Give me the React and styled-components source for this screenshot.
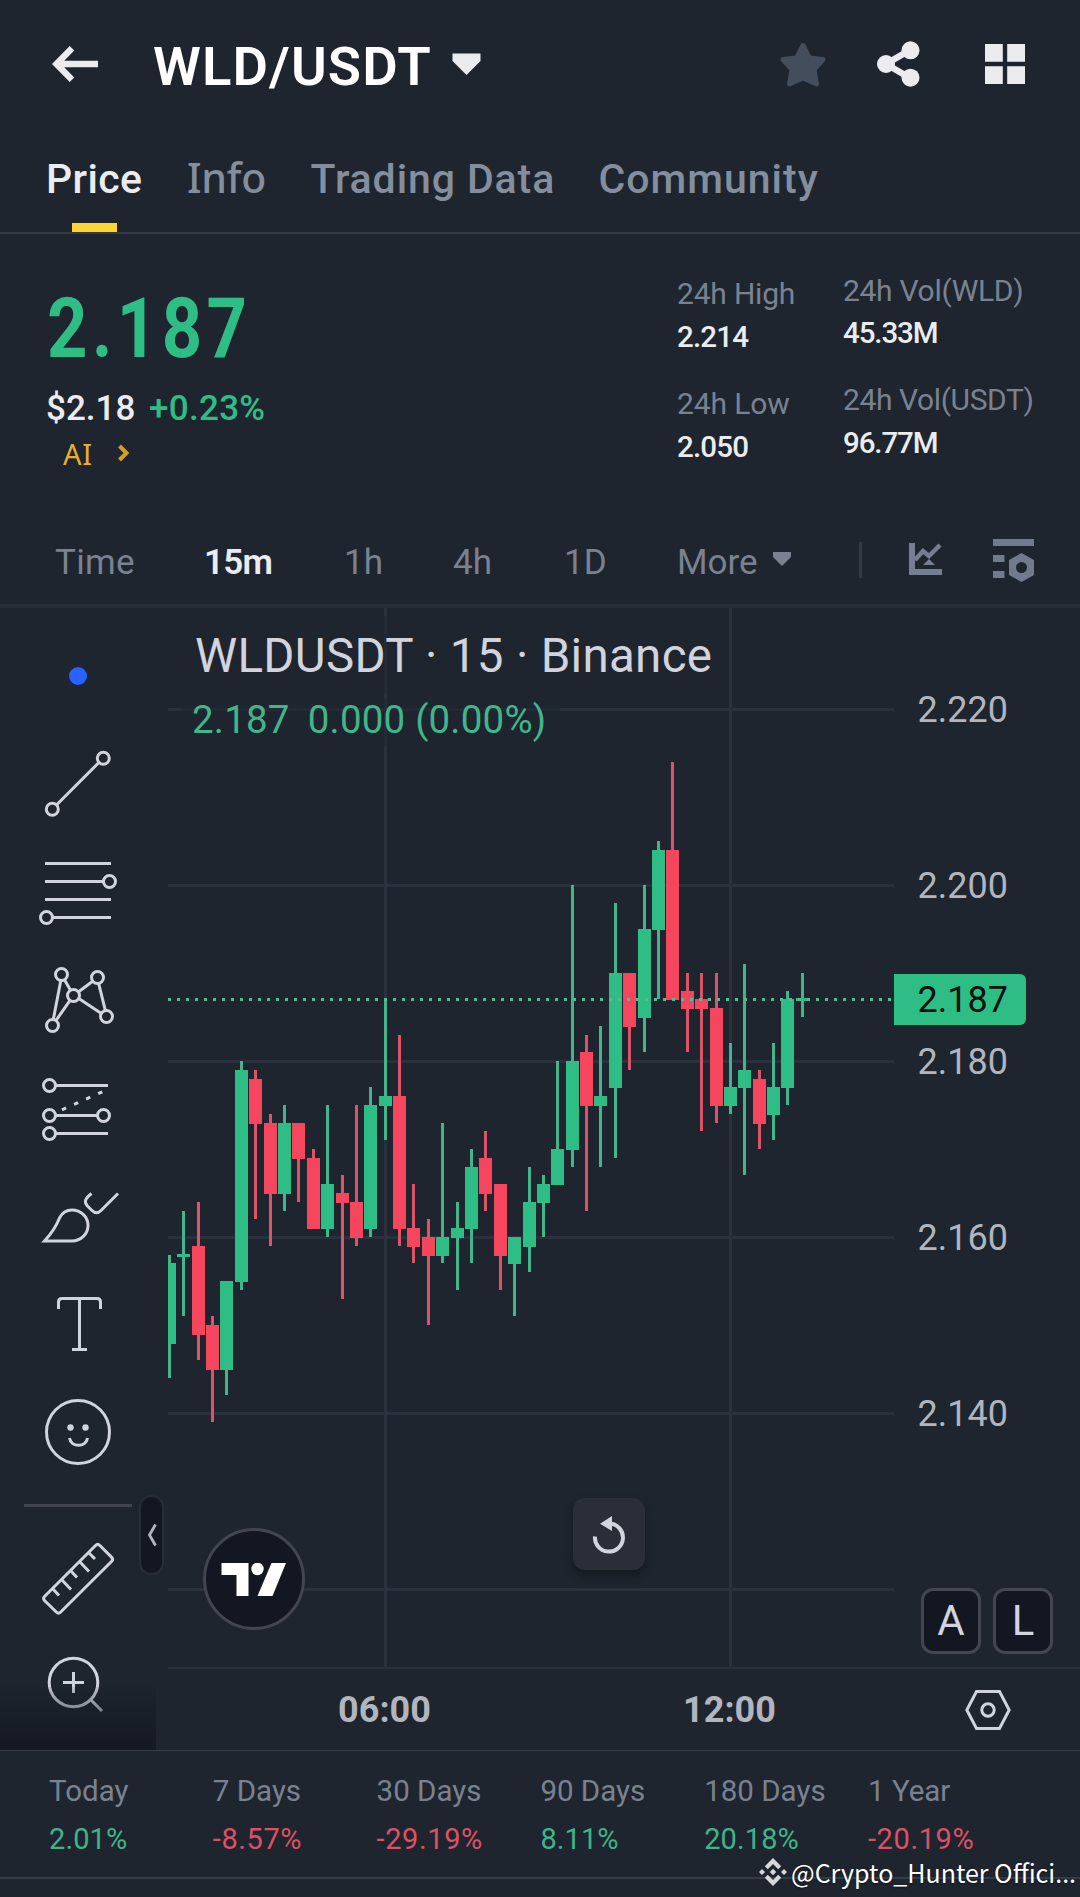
import React from "react";
import styled, { createGlobalStyle, css } from "styled-components";

const C = {
  bg: "#1e252f",
  line: "#2a313c",
  rule: "#333b47",
  green: "#2ebd85",
  greenWick: "#42b58a",
  red: "#f6465d",
  redWick: "#dd5368",
  muted: "#848e9c",
  dim: "#7a8290",
  text: "#eaecef",
  icon: "#d1d4dc",
  axis: "#b2b5be",
  panel: "#131722",
  edge: "#434651",
};

const Global = createGlobalStyle`
  html, body { margin: 0; background: ${C.bg}; }
  * { box-sizing: border-box; }
  svg { display: block; flex: none; }
`;

const Screen = styled.div`
  position: relative;
  width: 1080px;
  height: 1897px;
  overflow: hidden;
  display: flex;
  flex-direction: column;
  background: ${C.bg};
  color: ${C.text};
  font-family: Roboto, "Liberation Sans", sans-serif;
`;

/* ---------- header ---------- */
const Header = styled.header`
  height: 128px;
  display: flex;
  align-items: center;
  padding-left: 52px;
`;
const Pair = styled.h1`
  width: 299px;
  margin: 0 0 0 55px;
  padding-top: 4px;
  font-size: 54.5px;
  line-height: 55px;
  font-weight: 600;
  letter-spacing: 1.1px;
  white-space: nowrap;
  color: #fff;
`;
const HeaderActions = styled.div`
  display: flex;
  align-items: center;
  margin-left: auto;
  padding-right: 55px;
`;
const Gap = styled.span`
  width: ${(p) => p.$w}px;
`;

/* ---------- tabs ---------- */
const Tabs = styled.nav`
  height: 106px;
  display: flex;
  padding-left: 46px;
  border-bottom: 2px solid ${C.rule};
`;
const TabCell = styled.div`
  width: ${(p) => p.$w}px;
  display: flex;
  align-items: stretch;
`;
const Tab = styled.span`
  display: flex;
  flex-direction: column;
  align-items: center;
  justify-content: space-between;
  padding-top: 30px;
  font-size: 41px;
  line-height: 42px;
  font-weight: 500;
  letter-spacing: ${(p) => p.$ls || 0}px;
  white-space: nowrap;
  color: ${(p) => (p.$active ? C.text : C.muted)};
  ${(p) => p.$serifCap && css`
    font-family: "Noto Sans", sans-serif;
    padding-top: 28px;
  `}
`;
const TabMark = styled.i`
  width: 45px;
  height: 9px;
  background: #fcd535;
`;

/* ---------- ticker ---------- */
const Ticker = styled.section`
  height: 286px;
  display: flex;
`;
const PriceBlock = styled.div`
  width: 677px;
  padding: 52.5px 0 0 46px;
`;
const LastPrice = styled.div`
  width: 300px;
  margin-left: 1px;
  font-size: 83px;
  line-height: 83px;
  font-weight: 700;
  letter-spacing: 5.2px;
  color: ${C.green};
  transform: scaleX(0.85);
  transform-origin: left;
`;
const FiatRow = styled.div`
  display: flex;
  margin-top: 21px;
  font-size: 35px;
  line-height: 35px;
  font-weight: 500;
`;
const Fiat = styled.span`
  width: 103px;
`;
const Change = styled.span`
  color: ${C.green};
  letter-spacing: 0.3px;
`;
const AiRow = styled.div`
  display: flex;
  align-items: center;
  margin-top: 13px;
  padding-left: 17px;
  font-family: "Noto Sans", sans-serif;
  font-size: 29px;
  line-height: 29px;
  color: #e5b02c;
`;
const AiLabel = styled.span`
  width: 55px;
  letter-spacing: 0.6px;
`;
const StatColumn = styled.dl`
  width: ${(p) => p.$w}px;
  margin: 0;
  padding-top: ${(p) => p.$top}px;
  font-size: 30px;
  line-height: 30px;
  white-space: nowrap;
`;
const StatLabel = styled.dt`
  color: ${C.dim};
  letter-spacing: ${(p) => p.$ls || 0}px;
`;
const StatValue = styled.dd`
  margin: ${(p) => p.$gap}px 0 37px;
  font-weight: 500;
  font-size: 29.5px;
  letter-spacing: ${(p) => p.$ls}px;
`;

/* ---------- interval bar ---------- */
const Intervals = styled.div`
  height: 88px;
  display: flex;
  align-items: center;
  padding-left: 55px;
  border-bottom: 4px solid #272e39;
`;
const Interval = styled.span`
  width: ${(p) => p.$w}px;
  font-size: 35px;
  line-height: 35px;
  letter-spacing: ${(p) => p.$ls || 0}px;
  font-weight: ${(p) => (p.$active ? 600 : 400)};
  color: ${(p) => (p.$active ? C.text : C.dim)};
`;
const BarDivider = styled.i`
  width: 3px;
  height: 36px;
  margin: 0 47px 5px 68px;
  background: ${C.rule};
`;

/* ---------- chart ---------- */
const ChartArea = styled.section`
  position: relative;
  height: 1142px;
  display: grid;
  grid-template-columns: 168px 726px 186px;
  grid-template-rows: 1059px 83px;
`;
const Toolbar = styled.aside`
  position: relative;
  grid-row: 1 / 3;
  display: flex;
  flex-direction: column;
  padding-top: 14px;
`;
const Tool = styled.div`
  width: 156px;
  height: 108px;
  display: flex;
  align-items: center;
  justify-content: center;
`;
const Dot = styled.i`
  width: 18.5px;
  height: 18.5px;
  border-radius: 50%;
  background: #2962ff;
`;
const ToolRule = styled.i`
  width: 108px;
  height: 3px;
  margin: 18px 0 18px 24px;
  background: ${C.edge};
`;
const ToolbarFade = styled.div`
  position: absolute;
  left: 0;
  bottom: 0;
  width: 156px;
  height: 63px;
  background: linear-gradient(rgba(19, 23, 34, 0.1), rgba(19, 23, 34, 0.95));
`;
const CollapseHandle = styled.div`
  position: absolute;
  left: 139px;
  top: 887px;
  width: 25px;
  height: 80px;
  border: 2px solid #272c38;
  border-radius: 12px;
  background: ${C.panel};
  display: flex;
  align-items: center;
  justify-content: center;
`;
const Plot = styled.div`
  position: relative;
`;
const Legend = styled.div`
  position: absolute;
  left: 13px;
  top: 8px;
  display: flex;
  flex-direction: column;
  align-items: flex-start;
`;
const LegendTitle = styled.div`
  padding: 16px 0 14px 14px;
  font-size: 47.5px;
  line-height: 48px;
  white-space: nowrap;
  letter-spacing: 0.3px;
  color: #d1d4dc;
  background: rgba(30, 37, 47, 0.5);
`;
const LegendValues = styled.div`
  display: flex;
  gap: 18px;
  margin-top: 4px;
  padding: 2px 14px 7px 11px;
  font-size: 38.5px;
  line-height: 39px;
  letter-spacing: 0.2px;
  white-space: nowrap;
  color: ${C.greenWick};
  background: rgba(30, 37, 47, 0.5);
`;
const BrandBadge = styled.div`
  position: absolute;
  left: 35px;
  top: 920px;
  width: 102px;
  height: 102px;
  padding-top: 2px;
  border: 3px solid ${C.edge};
  border-radius: 50%;
  background: ${C.panel};
  display: flex;
  align-items: center;
  justify-content: center;
`;
const ResetButton = styled.div`
  position: absolute;
  left: 405px;
  top: 890px;
  width: 72px;
  height: 72px;
  border-radius: 12px;
  background: #2a2e39;
  box-shadow: 0 5px 10px rgba(0, 0, 0, 0.35);
`;
const PriceAxis = styled.div`
  position: relative;
  display: flex;
  flex-direction: column;
  padding: 14px 0 13px 23.5px;
  font-size: 36px;
  color: ${C.axis};
`;
const AxisLabel = styled.span`
  height: 176px;
  line-height: 176px;
`;
const PriceTag = styled.div`
  position: absolute;
  left: 0;
  top: 366px;
  width: 132px;
  height: 51px;
  padding-left: 23.5px;
  border-radius: 0 6px 6px 0;
  line-height: 53px;
  color: #07120d;
  background: ${C.green};
`;
const ScaleButtons = styled.div`
  display: flex;
  gap: 12px;
  margin-top: auto;
  padding-left: 3.5px;
`;
const ScaleButton = styled.div`
  width: 60px;
  height: 66px;
  border: 3px solid ${C.edge};
  border-radius: 12px;
  background: ${C.panel};
  color: ${C.icon};
  font-size: 42px;
  line-height: 60px;
  text-align: center;
`;
const TimeAxis = styled.div`
  grid-column: 2 / 4;
  display: flex;
  align-items: center;
  padding-left: 44px;
  border-top: 2px solid ${C.line};
`;
const TimeLabel = styled.span`
  width: 345px;
  text-align: center;
  font-size: 36px;
  line-height: 36px;
  font-weight: 700;
  color: ${C.axis};
`;

/* ---------- performance ---------- */
const Performance = styled.section`
  height: 129px;
  display: flex;
  padding: 25px 0 0 49px;
  border-top: 1px solid #373e49;
  border-bottom: 2px solid ${C.rule};
`;
const Period = styled.div`
  width: 163.8px;
  display: flex;
  flex-direction: column;
  gap: 18px;
  white-space: nowrap;
`;
const PeriodName = styled.span`
  font-size: 29.5px;
  line-height: 30px;
  color: ${C.dim};
`;
const PeriodChange = styled.span`
  font-size: 29px;
  line-height: 30px;
  letter-spacing: ${(p) => (p.$up ? 0.1 : 0.6)}px;
  color: ${(p) => (p.$up ? "#3fb489" : "#dd5066")};
`;
const Watermark = styled.div`
  position: absolute;
  left: 759px;
  bottom: 9px;
  display: flex;
  align-items: center;
  gap: 4px;
  font-family: "Noto Sans CJK SC", sans-serif;
  font-size: 25px;
  line-height: 32px;
  font-weight: 400;
  white-space: nowrap;
  color: #fff;
  text-shadow: 0 1px 2px rgba(0, 0, 0, 0.5);
`;

/* [high, body top, body bottom, low, rising] in thousandths */
const CANDLES = [
  [2158, 2157, 2148, 2144, 1], [2163, 2158, 2158, 2151, 1], [2164, 2159, 2149, 2146, 0],
  [2151, 2150, 2145, 2139, 0], [2155, 2155, 2145, 2142, 1], [2180, 2179, 2155, 2154, 1],
  [2179, 2178, 2173, 2162, 0], [2174, 2173, 2165, 2159, 0], [2175, 2173, 2165, 2163, 1],
  [2173, 2173, 2169, 2164, 0], [2170, 2169, 2161, 2161, 0], [2175, 2166, 2161, 2160, 1],
  [2167, 2165, 2164, 2153, 0], [2175, 2164, 2160, 2159, 0], [2177, 2175, 2161, 2160, 1],
  [2187, 2176, 2175, 2171, 1], [2183, 2176, 2161, 2159, 0], [2166, 2161, 2159, 2157, 0],
  [2162, 2160, 2158, 2150, 0], [2173, 2160, 2158, 2157, 1], [2164, 2161, 2160, 2154, 1],
  [2170, 2168, 2161, 2157, 1], [2172, 2169, 2165, 2163, 0], [2166, 2166, 2158, 2154, 0],
  [2160, 2160, 2157, 2151, 1], [2168, 2164, 2159, 2156, 1], [2167, 2166, 2164, 2160, 1],
  [2180, 2170, 2166, 2166, 1], [2200, 2180, 2170, 2168, 1], [2183, 2181, 2175, 2163, 0],
  [2184, 2176, 2175, 2168, 1], [2198, 2190, 2177, 2169, 1], [2190, 2190, 2184, 2179, 0],
  [2200, 2195, 2185, 2181, 1], [2205, 2204, 2195, 2187, 1], [2214, 2204, 2187, 2187, 0],
  [2190, 2188, 2186, 2181, 0], [2190, 2187, 2186, 2172, 0], [2190, 2186, 2175, 2173, 0],
  [2182, 2177, 2175, 2174, 1], [2191, 2179, 2177, 2167, 1], [2179, 2178, 2173, 2170, 0],
  [2182, 2177, 2174, 2171, 1], [2188, 2187, 2177, 2175, 1], [2190, 2187, 2187, 2185, 1],
];
const priceY = (t) => Math.floor(629.5 + (2160 - t) * 8.8);

function Candle({ data, index }) {
  const [high, top, bottom, low, up] = data;
  const x = Math.floor(index * 14.385 + 0.4);
  const y1 = priceY(high);
  const y2 = priceY(low);
  const flat = top === bottom;
  const bodyY = priceY(top) - (flat ? 1 : 0);
  const bodyH = flat ? 3 : priceY(bottom) + 1 - bodyY;
  return (
    <g>
      <rect x={x} y={y1} width="3" height={y2 - y1} fill={up ? C.greenWick : C.redWick} />
      <rect x={x - 5} y={bodyY} width="13" height={bodyH} fill={up ? C.green : C.red} />
    </g>
  );
}

function PlotCanvas() {
  return (
    <svg width="726" height="1059" viewBox="0 0 726 1059">
      <g fill={C.line}>
        {[100, 276, 452, 628, 804, 980].map((y) => (
          <rect key={y} x="0" y={y} width="726" height="3" />
        ))}
        {[216, 561].map((x) => (
          <rect key={x} x={x} y="0" width="3" height="1059" />
        ))}
      </g>
      {CANDLES.map((c, i) => (
        <Candle key={i} data={c} index={i} />
      ))}
      <path d="M0 391.5H726" stroke="#4fbd93" strokeWidth="3" strokeDasharray="3 6" />
    </svg>
  );
}

const Icon = ({ children }) => (
  <svg width="84" height="84" viewBox="0 0 84 84" fill="none" stroke={C.icon} strokeWidth="3">
    {children}
  </svg>
);
const Rings = ({ at }) => at.map(([x, y]) => <circle key={x + "-" + y} cx={x} cy={y} r="6" />);

const TrendLineIcon = () => (
  <Icon>
    <path d="M20.2 63.2L63.2 20.2" />
    <Rings at={[[16.3, 67.3], [67.3, 16.3]]} />
  </Icon>
);
const FibIcon = () => (
  <Icon>
    <path d="M9 13.5H75M9 31.5H67.5M9 49.5H75M16.5 67.5H75" />
    <Rings at={[[73.5, 31.5], [10.5, 67.5]]} />
  </Icon>
);
const PatternIcon = () => (
  <Icon>
    <path d="M28.5 21.7L34.5 32.3M42.3 34L56.7 23.2M42.8 40.6L65.4 55.4M34 42.4L20 62.5M24.8 22.5L17.3 61.5M62.6 25.4L69.4 52.6" />
    <Rings at={[[25.5, 16.5], [61.5, 19.5], [37.5, 37.5], [16.5, 67.5], [70.5, 58.5]]} />
  </Icon>
);
const ForecastIcon = () => (
  <Icon>
    <path d="M19.5 19.5H72M19.5 49.5H61.5M19.5 67.5H72" />
    <path d="M26 43.8L68 25" strokeDasharray="4.5 8.7" />
    <Rings at={[[13.5, 19.5], [13.5, 49.5], [67.5, 49.5], [13.5, 67.5]]} />
  </Icon>
);
const BrushIcon = () => (
  <Icon>
    <path d="M8.5 67H36C45 67 52 60 52 51.5C52 42.5 44.5 36 36 36C30 36 26 39 23.5 44C20 53 15 60 8.5 67Z" />
    <path d="M55.5 19.5C48.5 25 48 28 51.5 32L56 36.5C59 39.5 62 39.5 65 36.5L82 19.5" />
  </Icon>
);
const TextIcon = () => (
  <Icon>
    <path d="M22.5 27V20Q22.5 16.5 26 16.5H61Q64.5 16.5 64.5 20V27M43.5 16.5V67M36 67.5H51" />
  </Icon>
);
const SmileIcon = () => (
  <Icon>
    <circle cx="42" cy="42" r="31.5" />
    <circle cx="34.5" cy="37.5" r="3.2" fill={C.icon} stroke="none" />
    <circle cx="49.5" cy="37.5" r="3.2" fill={C.icon} stroke="none" />
    <path d="M33.5 48C35 57.8 50 57.8 51.5 48" />
  </Icon>
);
const RulerIcon = () => (
  <Icon>
    <path d="M8.5 59.5L59.5 8.5Q61.7 6.3 63.9 8.5L75.5 20.1Q77.7 22.3 75.5 24.5L24.7 75Q22.5 77.2 20.3 75L8.5 63.5Q6.7 61.5 8.5 59.5Z" />
    <path d="M52.5 15.5L59 22M43.5 24.5L53 34.5M34.5 33.5L41 40.5M25.5 42.5L35 52.5M16.5 51.5L23 58.5" />
  </Icon>
);
const ZoomInIcon = () => (
  <Icon>
    <circle cx="37.5" cy="37.5" r="24.3" />
    <path d="M27 37.5H48M37.5 27V48M55 55L66 66" />
  </Icon>
);

const TOOLS = [TrendLineIcon, FibIcon, PatternIcon, ForecastIcon, BrushIcon, TextIcon, SmileIcon];
const TABS = [
  ["Price", 141, 0.4], ["Info", 123.5, -0.2], ["Trading Data", 288, 0.9], ["Community", 240, 1],
];
const PERIODS = [
  ["Today", "2.01%"], ["7 Days", "-8.57%"], ["30 Days", "-29.19%"],
  ["90 Days", "8.11%"], ["180 Days", "20.18%"], ["1 Year", "-20.19%"],
];

export default function App() {
  return (
    <Screen>
      <Global />
      <Header>
        <svg width="46" height="36" viewBox="0 0 46 36" fill="none" stroke={C.text} strokeWidth="6.5">
          <path d="M46 18H5M20 2.3L4.5 18L20 33.7" />
        </svg>
        <Pair>WLD/USDT</Pair>
        <svg width="29" height="22" viewBox="0 0 29 22" fill={C.text}>
          <path d="M0.5 0.5H28.5V8L14.5 22L0.5 8Z" />
        </svg>
        <HeaderActions>
          <svg width="46" height="46" viewBox="0 0 46 46" fill="#444d5b" stroke="#444d5b" strokeWidth="5" strokeLinejoin="round">
            <path d="M23 4.5L29.3 17L43 18.5L34 28.5L36.5 43L23 37L9.500 43L12 28.5L3 18.5L16.7 17Z" />
          </svg>
          <Gap $w={50} />
          <svg width="44" height="46" viewBox="0 0 44 46" fill={C.text} stroke={C.text}>
            <path d="M34 9L10 23L34 37" fill="none" strokeWidth="6.5" />
            <circle cx="10" cy="23" r="9" stroke="none" />
            <circle cx="34.5" cy="9.3" r="9" stroke="none" />
            <circle cx="34.5" cy="36.7" r="9" stroke="none" />
          </svg>
          <Gap $w={65} />
          <svg width="40" height="40" viewBox="0 0 40 40" fill={C.text}>
            <path d="M0 0H17.8V17.8H0ZM22.2 0H40V17.8H22.2ZM0 22.2H17.8V40H0ZM22.2 22.2H40V40H22.2Z" />
          </svg>
        </HeaderActions>
      </Header>

      <Tabs>
        {TABS.map(([name, w, ls], i) => (
          <TabCell key={name} $w={w}>
            <Tab $active={i === 0} $ls={ls} $serifCap={name === "Info"}>
              {name}
              {i === 0 && <TabMark />}
            </Tab>
          </TabCell>
        ))}
      </Tabs>

      <Ticker>
        <PriceBlock>
          <LastPrice>2.187</LastPrice>
          <FiatRow>
            <Fiat>$2.18</Fiat>
            <Change>+0.23%</Change>
          </FiatRow>
          <AiRow>
            <AiLabel>AI</AiLabel>
            <svg width="12" height="18" viewBox="0 0 12 18" fill="none" stroke="#d5a021" strokeWidth="4">
              <path d="M1.5 2L8.5 9L1.5 16" />
            </svg>
          </AiRow>
        </PriceBlock>
        <StatColumn $w={166} $top={45}>
          <StatLabel $ls={-0.2}>24h High</StatLabel>
          <StatValue $gap={13} $ls={-0.8}>2.214</StatValue>
          <StatLabel $ls={-0.1}>24h Low</StatLabel>
          <StatValue $gap={13} $ls={-0.8}>2.050</StatValue>
        </StatColumn>
        <StatColumn $w={237} $top={42}>
          <StatLabel $ls={-0.3}>24h Vol(WLD)</StatLabel>
          <StatValue $gap={12} $ls={-1.1}>45.33M</StatValue>
          <StatLabel $ls={-0.4}>24h Vol(USDT)</StatLabel>
          <StatValue $gap={13} $ls={-1.1}>96.77M</StatValue>
        </StatColumn>
      </Ticker>

      <Intervals>
        <Interval $w={149} $ls={0.3}>Time</Interval>
        <Interval $w={140} $ls={-0.7} $active>15m</Interval>
        <Interval $w={109}>1h</Interval>
        <Interval $w={111}>4h</Interval>
        <Interval $w={113}>1D</Interval>
        <Interval $w={96}>More</Interval>
        <svg width="18" height="20" viewBox="0 0 18 20" fill={C.dim}>
          <path d="M0 0H18V5L9 14L0 5Z" />
        </svg>
        <BarDivider />
        <svg width="33" height="38" viewBox="0 0 33 38" fill="none" stroke="#767e92" strokeWidth="6">
          <path d="M3 0V29H33" />
          <path d="M6 17L14 8L20 13L31 2" strokeWidth="4.5" />
          <path d="M20 16L26 22H14Z" fill="#767e92" stroke="none" />
        </svg>
        <Gap $w={51} />
        <svg width="42" height="46" viewBox="0 0 42 46" fill="#717b8c">
          <path d="M0 0H41V7H0ZM0 16H11.5V23H0ZM0 32H11.5V39H0Z" />
          <path fillRule="evenodd" d="M28.5 14L41 21V36L28.5 43L16 36V21ZM28.5 23A5.5 5.5 0 1 0 28.5 34A5.5 5.5 0 1 0 28.5 23Z" />
        </svg>
      </Intervals>

      <ChartArea>
        <Toolbar>
          <Tool><Dot /></Tool>
          {TOOLS.map((T, i) => (
            <Tool key={i}><T /></Tool>
          ))}
          <ToolRule />
          <Tool><RulerIcon /></Tool>
          <Tool><ZoomInIcon /></Tool>
          <ToolbarFade />
          <CollapseHandle>
            <svg width="10" height="24" viewBox="0 0 10 24" fill="none" stroke={C.axis} strokeWidth="2.8">
              <path d="M8.5 1.5L2.5 12L8.5 22.5" />
            </svg>
          </CollapseHandle>
        </Toolbar>

        <Plot>
          <PlotCanvas />
          <Legend>
            <LegendTitle>WLDUSDT · 15 · Binance</LegendTitle>
            <LegendValues>
              <span>2.187</span>
              <span>0.000 (0.00%)</span>
            </LegendValues>
          </Legend>
          <BrandBadge>
            <svg width="66" height="34" viewBox="0 0 66 34" fill="#fff">
              <path d="M0.5 0H27.5V33H15.5V12H0.5Z" />
              <circle cx="36.5" cy="6" r="6.2" />
              <path d="M50.5 0H65L51.5 33H36.5Z" />
            </svg>
          </BrandBadge>
          <ResetButton>
            <svg width="72" height="72" viewBox="0 0 72 72" fill="none" stroke={C.icon} strokeWidth="4">
              <path d="M22 38.5A14 14 0 1 0 37 25.6" />
              <path d="M27 25.7L39 18V33Z" fill={C.icon} stroke="none" />
            </svg>
          </ResetButton>
        </Plot>

        <PriceAxis>
          {["2.220", "2.200", "2.180", "2.160", "2.140"].map((p) => (
            <AxisLabel key={p}>{p}</AxisLabel>
          ))}
          <PriceTag>2.187</PriceTag>
          <ScaleButtons>
            <ScaleButton>A</ScaleButton>
            <ScaleButton>L</ScaleButton>
          </ScaleButtons>
        </PriceAxis>

        <TimeAxis>
          <TimeLabel>06:00</TimeLabel>
          <TimeLabel>12:00</TimeLabel>
          <Gap $w={63} />
          <svg width="46" height="40" viewBox="0 0 46 40" fill="none" stroke={C.icon} strokeWidth="3">
            <path d="M11.5 1.5H34.5L44.2 20L34.5 38.5H11.5L1.8 20Z" />
            <circle cx="23" cy="20" r="6.2" />
          </svg>
        </TimeAxis>
      </ChartArea>

      <Performance>
        {PERIODS.map(([name, value]) => (
          <Period key={name}>
            <PeriodName>{name}</PeriodName>
            <PeriodChange $up={value[0] !== "-"}>{value}</PeriodChange>
          </Period>
        ))}
      </Performance>

      <Watermark>
        <svg width="28" height="28" viewBox="0 0 28 28" fill="#d6d8da">
          <path d="M14 0L22.2 8.2L19.2 11.2L14 6L8.8 11.2L5.8 8.2Z" />
          <path d="M14 28L5.8 19.8L8.8 16.8L14 22L19.2 16.8L22.2 19.8Z" />
          <path d="M0 14L3 11L6 14L3 17ZM22 14L25 11L28 14L25 17ZM14 10.8L17.2 14L14 17.2L10.8 14Z" />
        </svg>
        <span>@Crypto_Hunter Offici...</span>
      </Watermark>
    </Screen>
  );
}
